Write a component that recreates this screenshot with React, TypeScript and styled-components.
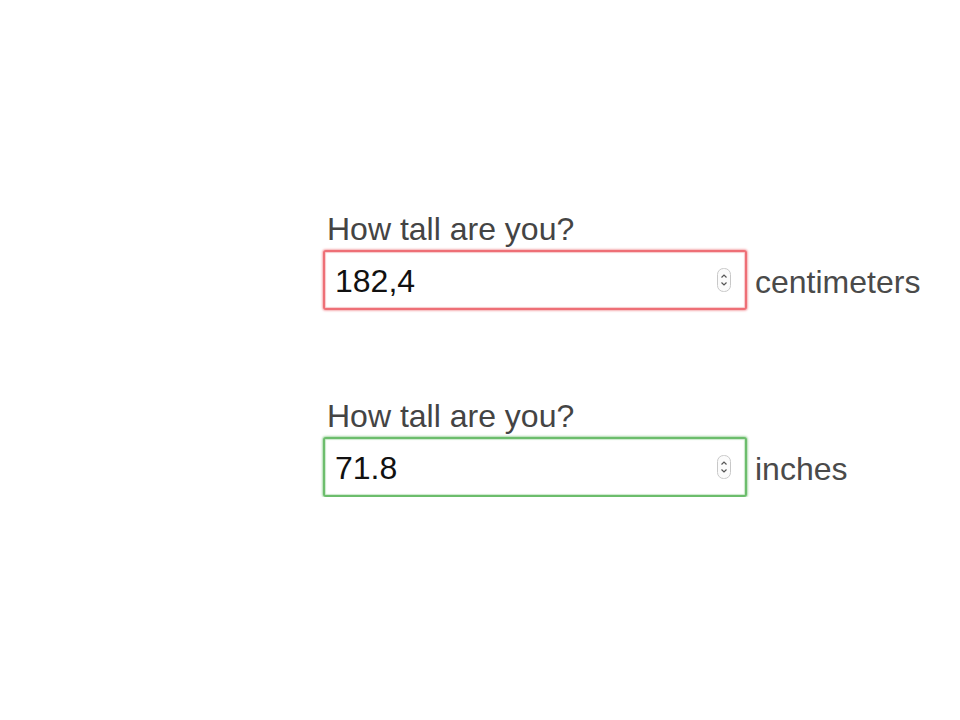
import React from 'react';
import styled, { createGlobalStyle } from 'styled-components';

const GlobalStyle = createGlobalStyle`
  html, body {
    margin: 0;
    background: #ffffff;
    font-family: 'Liberation Sans', Arial, Helvetica, sans-serif;
  }
`;

const Page = styled.div`
  display: flex;
  flex-direction: column;
  gap: 88px;
  padding: 211px 0 0 323px;
`;

const Field = styled.div`
  display: flex;
  flex-direction: column;
  gap: 2px;
`;

const Label = styled.label`
  display: block;
  padding-left: 4px;
  font-size: 32px;
  line-height: 37px;
  color: #444444;
`;

const Row = styled.div`
  display: flex;
  align-items: center;
  gap: 8px;
`;

type BoxProps = { $tone: 'invalid' | 'valid' };

const Box = styled.div<BoxProps>`
  box-sizing: border-box;
  display: flex;
  align-items: center;
  width: 424px;
  height: 60px;
  padding: 0 14px 0 10px;
  background: #ffffff;
  border: 2px solid ${(p) => (p.$tone === 'invalid' ? '#ee6f76' : '#6cbd6c')};
  border-radius: 3px;
  box-shadow: 0 0 2px 1px
      ${(p) => (p.$tone === 'invalid' ? 'rgba(238, 111, 118, 0.55)' : 'rgba(108, 189, 108, 0.55)')},
    inset 0 0 1px 1px ${(p) => (p.$tone === 'invalid' ? '#f8c9cb' : '#cbe8cb')};
`;

const Value = styled.input`
  flex: 1;
  min-width: 0;
  border: none;
  outline: none;
  background: transparent;
  padding: 2px 0 0;
  font-family: 'Liberation Sans', Arial, Helvetica, sans-serif;
  font-size: 32px;
  color: #111111;
`;

const Unit = styled.span`
  padding-top: 4px;
  font-size: 32px;
  color: #4a4a4a;
`;

function Spinner() {
  return (
    <svg width="14" height="24" viewBox="0 0 14 24">
      <rect x="0.5" y="0.5" width="13" height="23" rx="6" fill="#fbfbfb" stroke="#c8c8c8" />
      <path d="M4.5 9.5 L7 7 L9.5 9.5" fill="none" stroke="#555" strokeWidth="1.2" />
      <path d="M4.5 14.5 L7 17 L9.5 14.5" fill="none" stroke="#555" strokeWidth="1.2" />
    </svg>
  );
}

function HeightField(props: { value: string; unit: string; tone: 'invalid' | 'valid' }) {
  const { value, unit, tone } = props;
  return (
    <Field>
      <Label>How tall are you?</Label>
      <Row>
        <Box $tone={tone}>
          <Value readOnly value={value} />
          <Spinner />
        </Box>
        <Unit>{unit}</Unit>
      </Row>
    </Field>
  );
}

export default function App() {
  return (
    <>
      <GlobalStyle />
      <Page>
        <HeightField value="182,4" unit="centimeters" tone="invalid" />
        <HeightField value="71.8" unit="inches" tone="valid" />
      </Page>
    </>
  );
}
